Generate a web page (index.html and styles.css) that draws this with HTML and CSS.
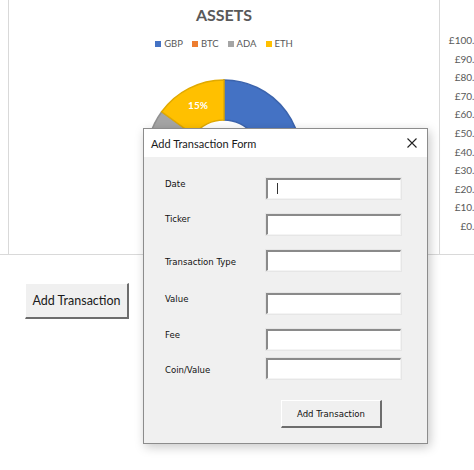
FILE: index.html
```html
<!DOCTYPE html>
<html>
<head>
<meta charset="utf-8">
<link rel="stylesheet" href="styles.css">
</head>
<body>
<div class="top">
  <div class="chart">
    <div class="chart-title">ASSETS</div>
    <div class="legend">
      <span class="lg"><i class="sw gbp"></i>GBP</span>
      <span class="lg"><i class="sw btc"></i>BTC</span>
      <span class="lg"><i class="sw ada"></i>ADA</span>
      <span class="lg"><i class="sw eth"></i>ETH</span>
    </div>
    <svg class="donut" width="430" height="180" viewBox="0 0 430 180">
      <path d="M215,20 A77,77 0 1 1 169.74,159.29 L193.25,126.93 A37,37 0 1 0 215,60 Z" fill="#4472c4" stroke="#3c64ad" stroke-width="1.5"/>
      <path d="M169.74,159.29 A77,77 0 0 1 158.87,149.71 L188.03,122.33 A37,37 0 0 0 193.25,126.93 Z" fill="#ed7d31" stroke="#d06d2b" stroke-width="1.5"/>
      <path d="M158.87,149.71 A77,77 0 0 1 152.71,51.74 L185.07,75.25 A37,37 0 0 0 188.03,122.33 Z" fill="#a5a5a5" stroke="#919191" stroke-width="1.5"/>
      <path d="M152.71,51.74 A77,77 0 0 1 215,20 L215,60 A37,37 0 0 0 185.07,75.25 Z" fill="#ffc000" stroke="#e0a900" stroke-width="1.5"/>
      <text x="189" y="48.5" class="pct" text-anchor="middle">15%</text>
    </svg>
  </div>
  <div class="chart2">
    <div class="axis">
      <div>£100.00</div>
      <div>£90.00</div>
      <div>£80.00</div>
      <div>£70.00</div>
      <div>£60.00</div>
      <div>£50.00</div>
      <div>£40.00</div>
      <div>£30.00</div>
      <div>£20.00</div>
      <div>£10.00</div>
      <div>£0.00</div>
    </div>
  </div>
</div>
<button class="sheet-btn">Add Transaction</button>

<div class="dialog">
  <div class="titlebar">
    <span class="title">Add Transaction Form</span>
    <svg class="close" width="10" height="10" viewBox="0 0 10 10"><path d="M0.5,0.5 L9.5,9.5 M9.5,0.5 L0.5,9.5" stroke="#222" stroke-width="1.1" fill="none"/></svg>
  </div>
  <div class="body">
    <div class="row r1"><span class="lbl l1">Date</span><span class="box"><i class="caret"></i></span></div>
    <div class="row r2"><span class="lbl l2">Ticker</span><span class="box"></span></div>
    <div class="row r3"><span class="lbl l3">Transaction Type</span><span class="box"></span></div>
    <div class="row r4"><span class="lbl l4">Value</span><span class="box"></span></div>
    <div class="row r5"><span class="lbl l5">Fee</span><span class="box"></span></div>
    <div class="row r6"><span class="lbl l6">Coin/Value</span><span class="box"></span></div>
    <div class="actions"><button class="form-btn">Add Transaction</button></div>
  </div>
</div>
</body>
</html>
```
FILE: styles.css
```css
html, body {
  margin: 0;
  padding: 0;
  width: 474px;
  height: 470px;
  overflow: hidden;
  background: #ffffff;
}
body {
  position: relative;
  font-family: "Liberation Sans", Arial, sans-serif;
}
.top {
  display: flex;
  width: 474px;
  height: 254px;
  border-bottom: 1px solid #d9d9d9;
  overflow: hidden;
}
.chart {
  margin-left: 8px;
  width: 430px;
  flex: none;
  border-left: 1px solid #d9d9d9;
  border-right: 1px solid #d9d9d9;
  display: flex;
  flex-direction: column;
  align-items: center;
}
.chart-title {
  margin-top: 5px;
  font-family: Lato, "Open Sans", sans-serif;
  font-weight: bold;
  font-size: 16px;
  line-height: 20px;
  color: #595959;
}
.legend {
  margin-top: 13px;
  display: flex;
  gap: 9px;
  font-family: Lato, "Open Sans", sans-serif;
  font-size: 9.5px;
  line-height: 12px;
  color: #595959;
}
.lg {
  display: flex;
  align-items: center;
}
.sw {
  display: inline-block;
  width: 6px;
  height: 6px;
  margin-right: 3px;
}
.gbp { background: #4472c4; }
.btc { background: #ed7d31; }
.ada { background: #a5a5a5; }
.eth { background: #ffc000; }
.donut {
  margin-top: 10px;
  display: block;
}
.pct {
  font-family: Lato, "Open Sans", sans-serif;
  font-weight: bold;
  font-size: 10px;
  fill: #ffffff;
}
.chart2 {
  flex: none;
  width: 60px;
}
.axis {
  margin-top: 31px;
  width: 46px;
  text-align: right;
  font-family: Lato, "Open Sans", sans-serif;
  font-size: 10px;
  color: #595959;
}
.axis div {
  height: 18.6px;
  line-height: 18.6px;
  white-space: nowrap;
}
.sheet-btn {
  display: block;
  margin: 28px 0 0 25px;
  width: 104px;
  height: 36px;
  padding: 0;
  background: #f0f0f0;
  border-style: solid;
  border-width: 1px 2px 2px 1px;
  border-color: #ffffff #6d6d6d #6d6d6d #ffffff;
  font-family: Lato, "Open Sans", sans-serif;
  font-size: 12.5px;
  color: #1a1a1a;
}
.dialog {
  position: absolute;
  left: 143px;
  top: 128px;
  width: 283px;
  height: 314px;
  border: 1px solid #8c8c8c;
  background: #f0f0f0;
  box-shadow: 2px 3px 10px rgba(0,0,0,0.22);
  display: flex;
  flex-direction: column;
}
.titlebar {
  height: 28px;
  background: #ffffff;
  display: flex;
  align-items: center;
  justify-content: space-between;
  padding: 0 10px 0 7px;
  flex: none;
}
.title {
  font-family: Lato, "Open Sans", sans-serif;
  font-size: 11px;
  color: #1a1a1a;
}
.close {
  display: block;
}
.body {
  flex: 1;
  padding: 21px 0 0 21px;
  display: flex;
  flex-direction: column;
  font-family: "DejaVu Sans Condensed", "DejaVu Sans", sans-serif;
  font-size: 9.5px;
  color: #111;
}
.row {
  display: flex;
  align-items: flex-start;
  height: 20px;
}
.r2, .r3, .r5 { margin-top: 16px; }
.r4 { margin-top: 23px; }
.r6 { margin-top: 9px; }
.lbl {
  width: 101px;
  line-height: 12px;
}
.l1 { margin-top: 0px; }
.l2 { margin-top: -1px; }
.l3 { margin-top: 6px; }
.l4 { margin-top: 0px; }
.l5 { margin-top: 0px; }
.l6 { margin-top: 6px; }
.box {
  position: relative;
  box-sizing: border-box;
  width: 135px;
  height: 21px;
  background: #ffffff;
  border-style: solid;
  border-width: 2px 1px 1px 2px;
  border-color: #8a8a8a #f4f4f4 #f4f4f4 #8a8a8a;
  box-shadow: 0 0 0 1px #e6e6e6;
}
.caret {
  position: absolute;
  left: 9px;
  top: 3px;
  width: 1px;
  height: 11px;
  background: #333;
}
.actions {
  margin-top: 22px;
  padding-left: 116px;
}
.form-btn {
  display: block;
  width: 101px;
  height: 28px;
  padding: 0;
  background: #f0f0f0;
  border-style: solid;
  border-width: 1px 2px 2px 1px;
  border-color: #ffffff #6d6d6d #6d6d6d #ffffff;
  font-family: "DejaVu Sans Condensed", "DejaVu Sans", sans-serif;
  font-size: 9.5px;
  color: #111;
}
```
